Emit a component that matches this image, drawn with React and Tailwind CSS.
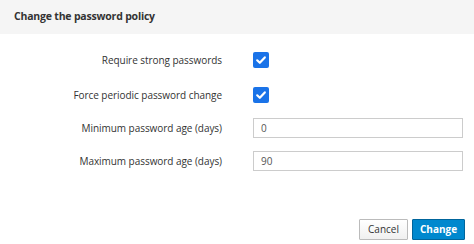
import React from "react";

function Check() {
  return (
    <div className="w-4 h-4 rounded-[2px] bg-[#1a73e8] flex items-center justify-center">
      <svg width="12" height="12" viewBox="0 0 12 12">
        <path d="M2.2 6.3 L4.8 8.8 L9.8 3.4" fill="none" stroke="white" strokeWidth="2.2" strokeLinecap="round" strokeLinejoin="round" />
      </svg>
    </div>
  );
}

export default function App() {
  return (
    <div className="w-[474px] h-[244px] bg-white flex flex-col text-[#333]" style={{ fontFamily: '"Open Sans", sans-serif' }}>
      <div className="h-[34px] bg-[#f5f5f5] flex items-center pl-[14px]">
        <span className="text-[10.5px] font-bold tracking-[-0.2px]">Change the password policy</span>
      </div>
      <div className="grid grid-cols-[222px_1fr] gap-x-[31px] pr-[11px] pt-[14px] items-center text-[10px]">
        <div className="text-right h-6 flex items-center justify-end tracking-[-0.05px]">Require strong passwords</div>
        <div className="h-6 flex items-center"><Check /></div>
        <div className="text-right h-6 flex items-center justify-end mt-[11px] tracking-[-0.05px]">Force periodic password change</div>
        <div className="h-6 flex items-center mt-[11px]"><Check /></div>
        <div className="text-right flex items-center justify-end mt-[11px] h-5 tracking-[-0.05px]">Minimum password age (days)</div>
        <div className="mt-[11px]">
          <div className="h-5 border border-[#ccc] flex items-center px-[7px] text-[#555]">0</div>
        </div>
        <div className="text-right flex items-center justify-end mt-[13px] h-5 tracking-[-0.05px]">Maximum password age (days)</div>
        <div className="mt-[13px]">
          <div className="h-5 border border-[#ccc] flex items-center px-[7px] text-[#555]">90</div>
        </div>
      </div>
      <div className="flex-1" />
      <div className="flex justify-end gap-[4px] pr-[9px] pb-[4px] text-[10px]">
        <button className="h-[21px] w-[49px] border border-[#bbb] bg-gradient-to-b from-white to-[#f0f0f0] text-[#333] rounded-[1px]">Cancel</button>
        <button className="h-[21px] w-[53px] border border-[#00659c] bg-[#0088ce] text-white font-bold rounded-[1px]">Change</button>
      </div>
    </div>
  );
}
